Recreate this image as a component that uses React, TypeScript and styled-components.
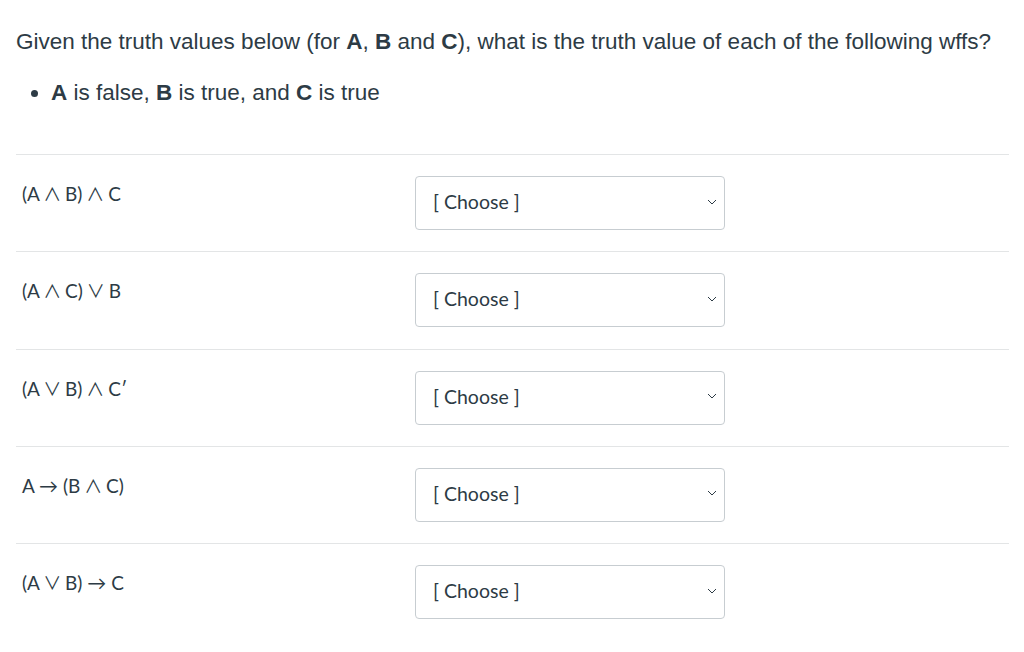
import { FC, ReactNode } from 'react'
import styled, { createGlobalStyle } from 'styled-components'

const GlobalStyle = createGlobalStyle`
  html, body {
    margin: 0;
    padding: 0;
    background: #ffffff;
  }
  body {
    color: #2d3b45;
    font-family: "Liberation Sans", Arial, sans-serif;
  }
`

// logic operators in the source are tall and thin, the CJK font has that shape
const Op = styled.span`
  font-family: "Noto Sans CJK JP", sans-serif;
  font-size: 0.95em;
  margin: 0 -1px;
`

const and = <Op>{'\u2227'}</Op>
const or = <Op>{'\u2228'}</Op>

type Question = {
  id: string
  label: ReactNode
}

const questions: Question[] = [
  { id: 'q1', label: <>(A {and} B) {and} C</> },
  { id: 'q2', label: <>(A {and} C) {or} B</> },
  { id: 'q3', label: <>(A {or} B) {and} C{'\u2032'}</> },
  { id: 'q4', label: <>A {'\u2192'} (B {and} C)</> },
  { id: 'q5', label: <>(A {or} B) {'\u2192'} C</> },
]

const Page = styled.div`
  padding: 26px 15px 0 16px;
  width: 1024px;
  box-sizing: border-box;
`

const Prompt = styled.p`
  margin: 0;
  font-size: 22.5px;
  line-height: 32px;
`

const Facts = styled.ul`
  margin: 19px 0 0;
  padding: 0 0 0 35px;
  font-size: 22.5px;
  line-height: 32px;
`

const List = styled.div`
  margin-top: 45px;
  border-top: 1px solid #e3e5e6;
`

const Row = styled.div`
  display: grid;
  grid-template-columns: 399px 310px;
  padding: 21px 0 21.25px;
  border-bottom: 1px solid #e3e5e6;
  &:last-child {
    border-bottom: none;
  }
`

const Label = styled.div`
  font-family: Lato, "Liberation Sans", sans-serif;
  font-size: 19px;
  line-height: 26px;
  height: 26px;
  padding: 4px 0 0 6px;
`

const SelectBox = styled.div`
  display: flex;
  align-items: center;
  justify-content: space-between;
  height: 54px;
  box-sizing: border-box;
  border: 1px solid #c7cdd1;
  border-radius: 4px;
  padding: 0 7px 3px 17px;
  font-family: Lato, "Liberation Sans", sans-serif;
  font-size: 19.5px;
  color: #2d3b45;
`

const Chevron: FC = () => (
  <svg width="10" height="6" viewBox="0 0 10 6" fill="none">
    <path d="M1 1l4 4 4-4" stroke="#2d3b45" strokeWidth="1" />
  </svg>
)

const App: FC = () => (
  <>
    <GlobalStyle />
    <Page>
      <Prompt>
        Given the truth values below (for <b>A</b>, <b>B</b> and <b>C</b>), what is the truth value of
        each of the following wffs?
      </Prompt>
      <Facts>
        <li>
          <b>A</b> is false, <b>B</b> is true, and <b>C</b> is true
        </li>
      </Facts>
      <List>
        {questions.map(q => (
          <Row key={q.id}>
            <Label>{q.label}</Label>
            <SelectBox>
              <span>[ Choose ]</span>
              <Chevron />
            </SelectBox>
          </Row>
        ))}
      </List>
    </Page>
  </>
)

export default App
